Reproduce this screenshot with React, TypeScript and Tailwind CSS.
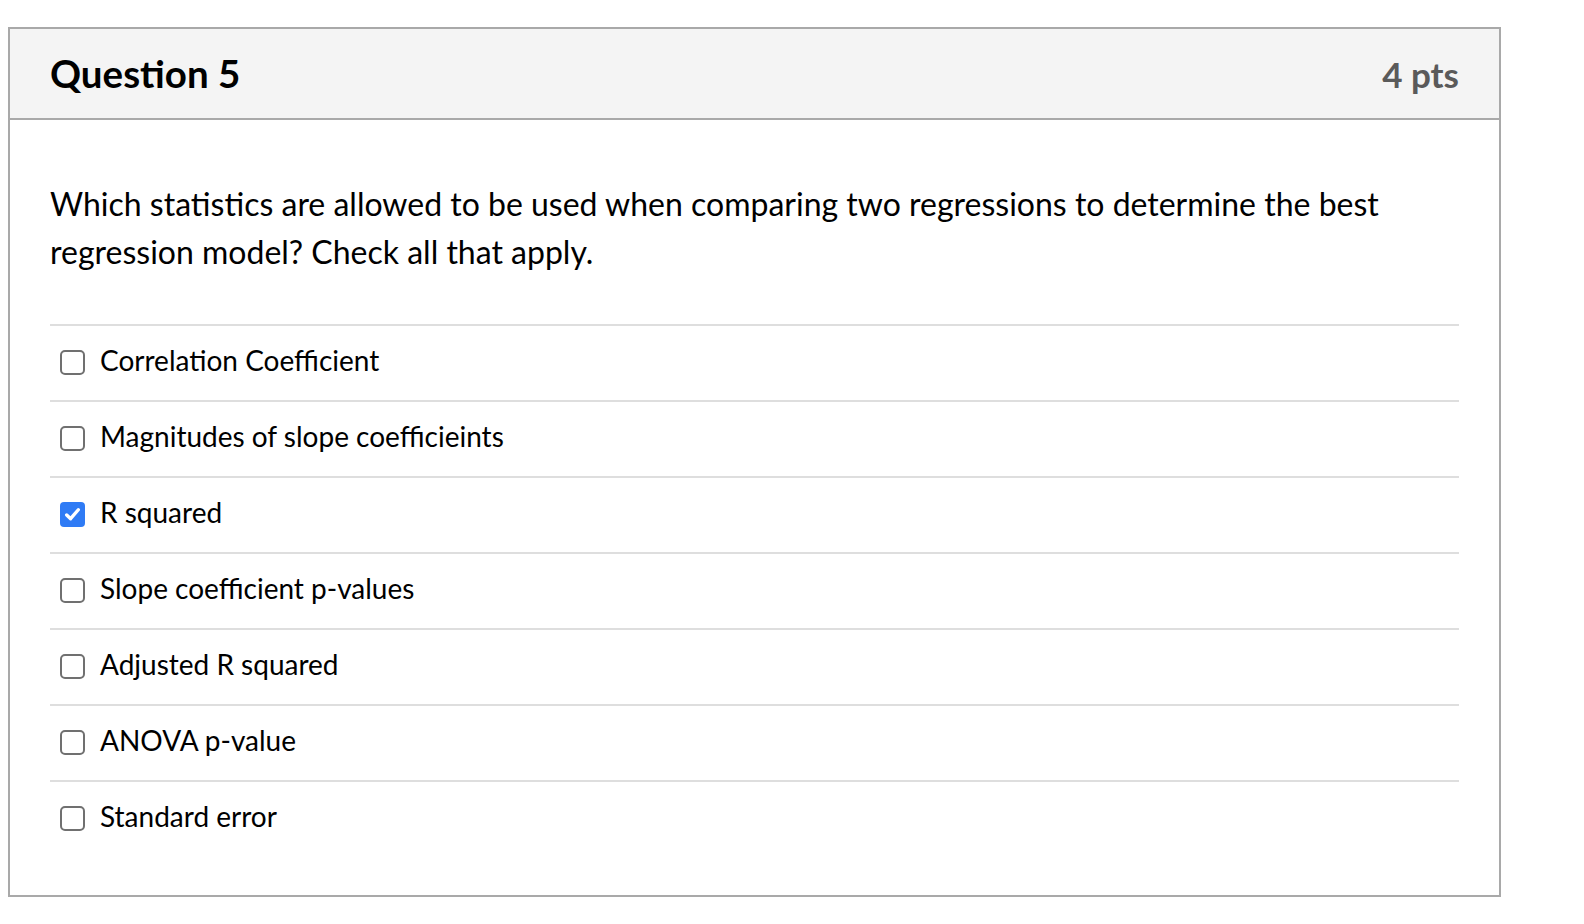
import React from "react";

const options = [
  { label: "Correlation Coefficient", checked: false },
  { label: "Magnitudes of slope coefficieints", checked: false },
  { label: "R squared", checked: true },
  { label: "Slope coefficient p-values", checked: false },
  { label: "Adjusted R squared", checked: false },
  { label: "ANOVA p-value", checked: false },
  { label: "Standard error", checked: false },
];

function Box({ checked }: { checked: boolean }) {
  if (checked) {
    return (
      <span className="mt-[4px] flex h-[25px] w-[25px] shrink-0 items-center justify-center rounded-[4px] bg-[#2f7bf5]">
        <svg width="19" height="19" viewBox="0 0 18 18">
          <path d="M3.5 9.5 L7.2 13 L14.5 4.5" fill="none" stroke="white" strokeWidth="3.2" strokeLinecap="round" strokeLinejoin="round" />
        </svg>
      </span>
    );
  }
  return <span className="mt-[4px] h-[25px] w-[25px] shrink-0 rounded-[5px] border-[2.5px] border-[#707070] bg-white" />;
}

export default function App() {
  return (
    <div className="h-[924px] w-full bg-white pl-[8px] pt-[27px]" style={{ fontFamily: "Lato, 'Open Sans', sans-serif" }}>
      <div className="w-[1493px] border-2 border-[#a9a9a9] bg-white">
        <div className="flex h-[91px] items-center justify-between border-b-2 border-[#a9a9a9] bg-[#f4f4f4] px-[40px]">
          <div className="text-[38.5px] font-bold text-black">Question 5</div>
          <div className="pt-[2px] text-[35px] font-bold text-[#5a5a5a]">4 pts</div>
        </div>
        <div className="px-[40px] pb-[39px] pt-[60px]">
          <p className="text-[32px] leading-[48px] text-black">
            Which statistics are allowed to be used when comparing two regressions to determine the best
            <br />
            regression model? Check all that apply.
          </p>
          <div className="mt-[48px]">
            {options.map((o) => (
              <div key={o.label} className="flex h-[76px] items-center gap-[15px] border-t-2 border-[#dedede] pb-[6px] pl-[10px]">
                <Box checked={o.checked} />
                <span className="text-[28px] text-black">{o.label}</span>
              </div>
            ))}
          </div>
        </div>
      </div>
    </div>
  );
}
